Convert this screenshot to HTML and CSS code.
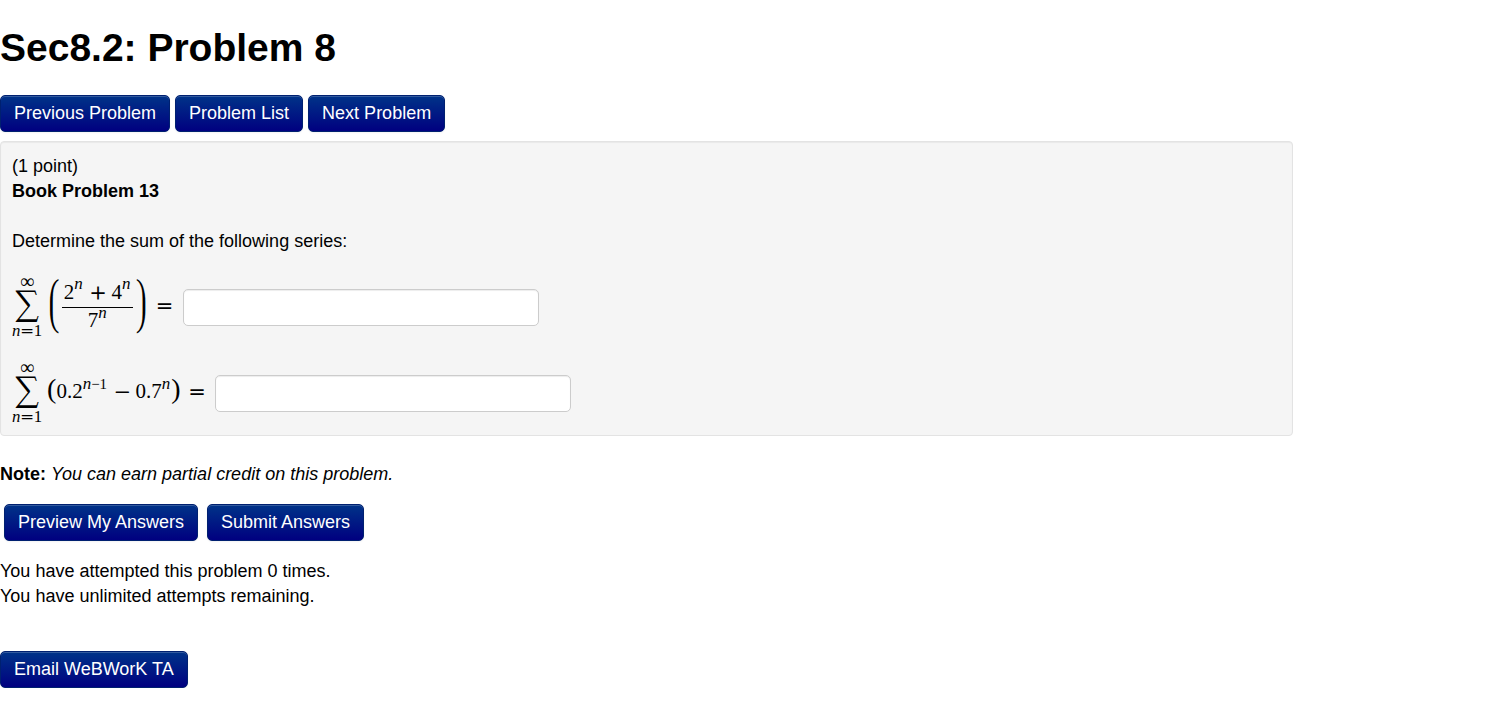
FILE: index.html
```html
<!DOCTYPE html>
<html lang="en">
<head>
    <meta charset="UTF-8">
    <meta name="viewport" content="width=device-width, initial-scale=1.0">
    <title>Sec8.2: Problem 8</title>
    <link rel="stylesheet" href="styles.css">
</head>
<body>

    <h1>Sec8.2: Problem 8</h1>

    <nav class="problem-nav">
        <a class="btn" href="#previous">Previous Problem</a>
        <a class="btn" href="#list">Problem List</a>
        <a class="btn" href="#next">Next Problem</a>
    </nav>

    <form id="problem-form">
        <div class="problem-content">
            <div>(1 point)</div>
            <div><b>Book Problem 13</b></div>
            <p>Determine the sum of the following series:</p>

            <div class="answer-row">
                <label for="answer-1">
                    <math displaystyle="true">
                        <munderover>
                            <mo lspace="0" rspace="0">∑</mo>
                            <mrow><mi>n</mi><mo lspace="0" rspace="0">=</mo><mn>1</mn></mrow>
                            <mn class="infinity">∞</mn>
                        </munderover>
                        <mrow class="group">
                            <mo>(</mo>
                            <mfrac>
                                <mrow class="numerator"><msup><mn>2</mn><mi>n</mi></msup><mo lspace="6px" rspace="5px">+</mo><msup><mn>4</mn><mi>n</mi></msup></mrow>
                                <msup><mn>7</mn><mi>n</mi></msup>
                            </mfrac>
                            <mo>)</mo>
                        </mrow>
                        <mo lspace="8px" rspace="0">=</mo>
                    </math>
                </label>
                <input type="text" id="answer-1">
            </div>

            <div class="answer-row">
                <label for="answer-2">
                    <math displaystyle="true">
                        <munderover>
                            <mo lspace="0" rspace="0">∑</mo>
                            <mrow><mi>n</mi><mo lspace="0" rspace="0">=</mo><mn>1</mn></mrow>
                            <mn class="infinity">∞</mn>
                        </munderover>
                        <mrow class="group">
                            <mo class="paren" stretchy="false">(</mo>
                            <msup><mn>0.2</mn><mrow><mi>n</mi><mo lspace="0" rspace="0">−</mo><mn>1</mn></mrow></msup>
                            <mo lspace="6px" rspace="5px">−</mo>
                            <msup><mn>0.7</mn><mi>n</mi></msup>
                            <mo class="paren" stretchy="false">)</mo>
                        </mrow>
                        <mo lspace="8px" rspace="0">=</mo>
                    </math>
                </label>
                <input type="text" id="answer-2">
            </div>
        </div>

        <p class="note"><b>Note:</b> <i>You can earn partial credit on this problem.</i></p>

        <div class="submit-buttons">
            <button type="button" class="btn">Preview My Answers</button>
            <button type="button" class="btn">Submit Answers</button>
        </div>
    </form>

    <p class="attempts">
        You have attempted this problem 0 times.<br>
        You have unlimited attempts remaining.
    </p>

    <button type="button" class="btn">Email WeBWorK TA</button>

</body>
</html>
```

FILE: styles.css
```css
* {
    box-sizing: border-box;
}

body {
    margin: 0;
    font-family: "Liberation Sans", Arial, sans-serif;
    font-size: 18px;
    line-height: 25px;
    color: #000;
    background-color: #fff;
}

h1 {
    margin: 23px 0 22px;
    font-size: 39px;
    line-height: 50px;
}

.btn {
    display: inline-block;
    padding: 5px 13px;
    border: 1px solid #002070;
    border-radius: 5px;
    font-family: inherit;
    font-size: 18px;
    line-height: 25px;
    color: #fff;
    text-decoration: none;
    background-image: linear-gradient(to bottom, #003388, #000080);
    box-shadow: inset 0 1px 0 rgba(255, 255, 255, 0.2), 0 1px 2px rgba(0, 0, 0, 0.05);
    cursor: pointer;
}

    .btn:hover {
        background-image: none;
        background-color: #000080;
    }

.problem-nav {
    display: flex;
    gap: 5px;
    margin-bottom: 9px;
}

.problem-content {
    width: 86.7%;
    padding: 12px 11px 12px;
    border: 1px solid #e3e3e3;
    border-radius: 4px;
    background-color: #f5f5f5;
    box-shadow: inset 0 1px 1px rgba(0, 0, 0, 0.05);
}

    .problem-content p {
        margin: 25px 0 23px;
    }

.answer-row {
    display: flex;
    align-items: center;
    gap: 10px;
    height: 60px;
}

    .answer-row + .answer-row {
        margin-top: 26px;
    }

    .answer-row input {
        width: 356px;
        height: 37px;
        padding: 5px 7px;
        border: 1px solid #ccc;
        border-radius: 5px;
        font-family: inherit;
        font-size: 18px;
        background-color: #fff;
        box-shadow: inset 0 1px 1px rgba(0, 0, 0, 0.075);
    }

/* Formulas: numbers in the text serif, stretchy operators in the math font */
math {
    font-family: "DejaVu Math TeX Gyre", "Liberation Serif", serif;
    font-size: 21px;
}

mn,
mi,
msup,
.paren {
    font-family: "Liberation Serif", "Times New Roman", serif;
}

mi {
    font-style: italic;
    text-transform: none;
}

msup {
    margin-right: -3px;
}

    msup mi {
        font-size: 17px;
    }

mfrac,
.numerator {
    padding: 0 2px;
}

.infinity {
    font-size: 20px;
}

.group {
    padding-left: 5px;
}

.paren {
    font-size: 28px;
}

.note {
    margin: 26px 0 17px;
}

.submit-buttons {
    display: flex;
    gap: 9px;
    padding-left: 4px;
}

.attempts {
    margin: 18px 0 42px;
}
```
